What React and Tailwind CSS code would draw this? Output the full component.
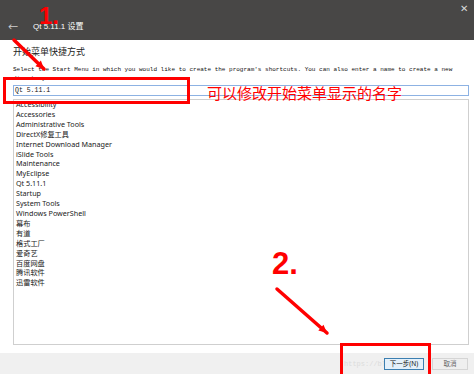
// App.jsx
import React from "react";

const ITEMS = [
  "Accessibility",
  "Accessories",
  "Administrative Tools",
  "DirectX修复工具",
  "Internet Download Manager",
  "iSlide Tools",
  "Maintenance",
  "MyEclipse",
  "Qt 5.11.1",
  "Startup",
  "System Tools",
  "Windows PowerShell",
  "幕布",
  "有道",
  "格式工厂",
  "爱奇艺",
  "百度网盘",
  "腾讯软件",
  "迅雷软件",
];

function Arrow({ x1, y1, x2, y2 }) {
  // red hand-drawn style arrow
  const ang = Math.atan2(y2 - y1, x2 - x1);
  const len = 9;
  const a1 = ang + Math.PI - 0.45;
  const a2 = ang + Math.PI + 0.45;
  const p1 = `${x2 + len * Math.cos(a1)},${y2 + len * Math.sin(a1)}`;
  const p2 = `${x2 + len * Math.cos(a2)},${y2 + len * Math.sin(a2)}`;
  return (
    <>
      <line x1={x1} y1={y1} x2={x2} y2={y2} stroke="#f00" strokeWidth="3.5" strokeLinecap="round" />
      <polygon points={`${x2},${y2} ${p1} ${p2}`} fill="#f00" />
    </>
  );
}

export default function App() {
  return (
    <div className="relative w-[474px] h-[374px] overflow-hidden bg-white flex flex-col font-['Noto_Sans','Noto_Sans_CJK_SC',sans-serif]">
      {/* Title bar */}
      <div className="relative h-[40px] shrink-0 bg-[#484746] flex items-end pb-[7px] pl-[8px]">
        <span className="text-[#cfcfcf] text-[10px] leading-[12px] w-[25px]">←</span>
        <span className="text-white text-[8px] leading-[12px] font-['Liberation_Sans','Noto_Sans_CJK_SC',sans-serif]">
          Qt 5.11.1 设置
        </span>
        <span className="absolute right-[6px] top-[1px] text-[#d8d8d8] text-[10px]">✕</span>
      </div>

      {/* Body */}
      <div className="flex-1 flex flex-col pl-[13px] pr-[5px] pt-[6px] pb-[8px] min-h-0">
        <h2 className="text-[9px] leading-[12px] text-[#222] font-['Noto_Sans_CJK_SC',serif]">
          开始菜单快捷方式
        </h2>
        <p className="mt-[7px] text-[6px] leading-[9px] text-[#111] font-['Liberation_Mono',monospace]">
          Select the Start Menu in which you would like to create the program's shortcuts. You can also enter a name to create a new directory.
        </p>
        <div className="mt-[2px] h-[11px] border border-[#8db2e3] flex items-center px-[1px] text-[6.5px] text-[#111] font-['Liberation_Mono',monospace]">
          Qt 5.11.1
        </div>
        <div className="mt-[3px] flex-1 border border-[#cfcfcf] pl-[2px] overflow-hidden">
          {ITEMS.map((it) => (
            <div key={it} className="text-[7.2px] leading-[9.9px] text-[#1a1a1a]">
              {it}
            </div>
          ))}
        </div>
      </div>

      {/* Footer */}
      <div className="relative h-[21px] shrink-0 bg-[#f0f0f0] flex items-center justify-end gap-[8px] pr-[6px]">
        <span className="absolute left-[344px] top-[6px] text-[7px] text-[#dcdcdc] font-['Liberation_Mono',monospace]">
          https://bl
        </span>
        <button className="relative h-[12px] w-[40px] border border-[#3c7fb1] bg-[#e5f1fb] text-[6.5px] leading-[10px] text-[#111]">
          下一步(N)
        </button>
        <button className="relative h-[12px] w-[36px] border border-[#d5d5d5] bg-[#efefef] text-[6.5px] leading-[10px] text-[#666]">
          取消
        </button>
      </div>

      {/* Annotations */}
      <div className="absolute left-[39px] top-[1px] text-[#f00] text-[24px] font-bold leading-[30px] font-['Liberation_Sans',sans-serif]">
        1.
      </div>
      <div className="absolute left-[272px] top-[247px] text-[#f00] text-[31px] font-bold leading-[34px] font-['Liberation_Sans',sans-serif]">
        2.
      </div>
      <div className="absolute left-[3px] top-[77px] w-[187px] h-[27px] border-[3px] border-[#f00]" />
      <div className="absolute left-[340px] top-[343px] w-[91px] h-[34px] border-[3px] border-[#f00]" />
      <div className="absolute left-[207px] top-[84px] text-[#f00] text-[15px] leading-[18px] font-['Noto_Sans_CJK_SC',sans-serif]">
        可以修改开始菜单显示的名字
      </div>
      <svg className="absolute left-0 top-0 pointer-events-none" width="474" height="374">
        <Arrow x1={14} y1={40} x2={44} y2={69} />
        <Arrow x1={277} y1={289} x2={327} y2={333} />
      </svg>
    </div>
  );
}
